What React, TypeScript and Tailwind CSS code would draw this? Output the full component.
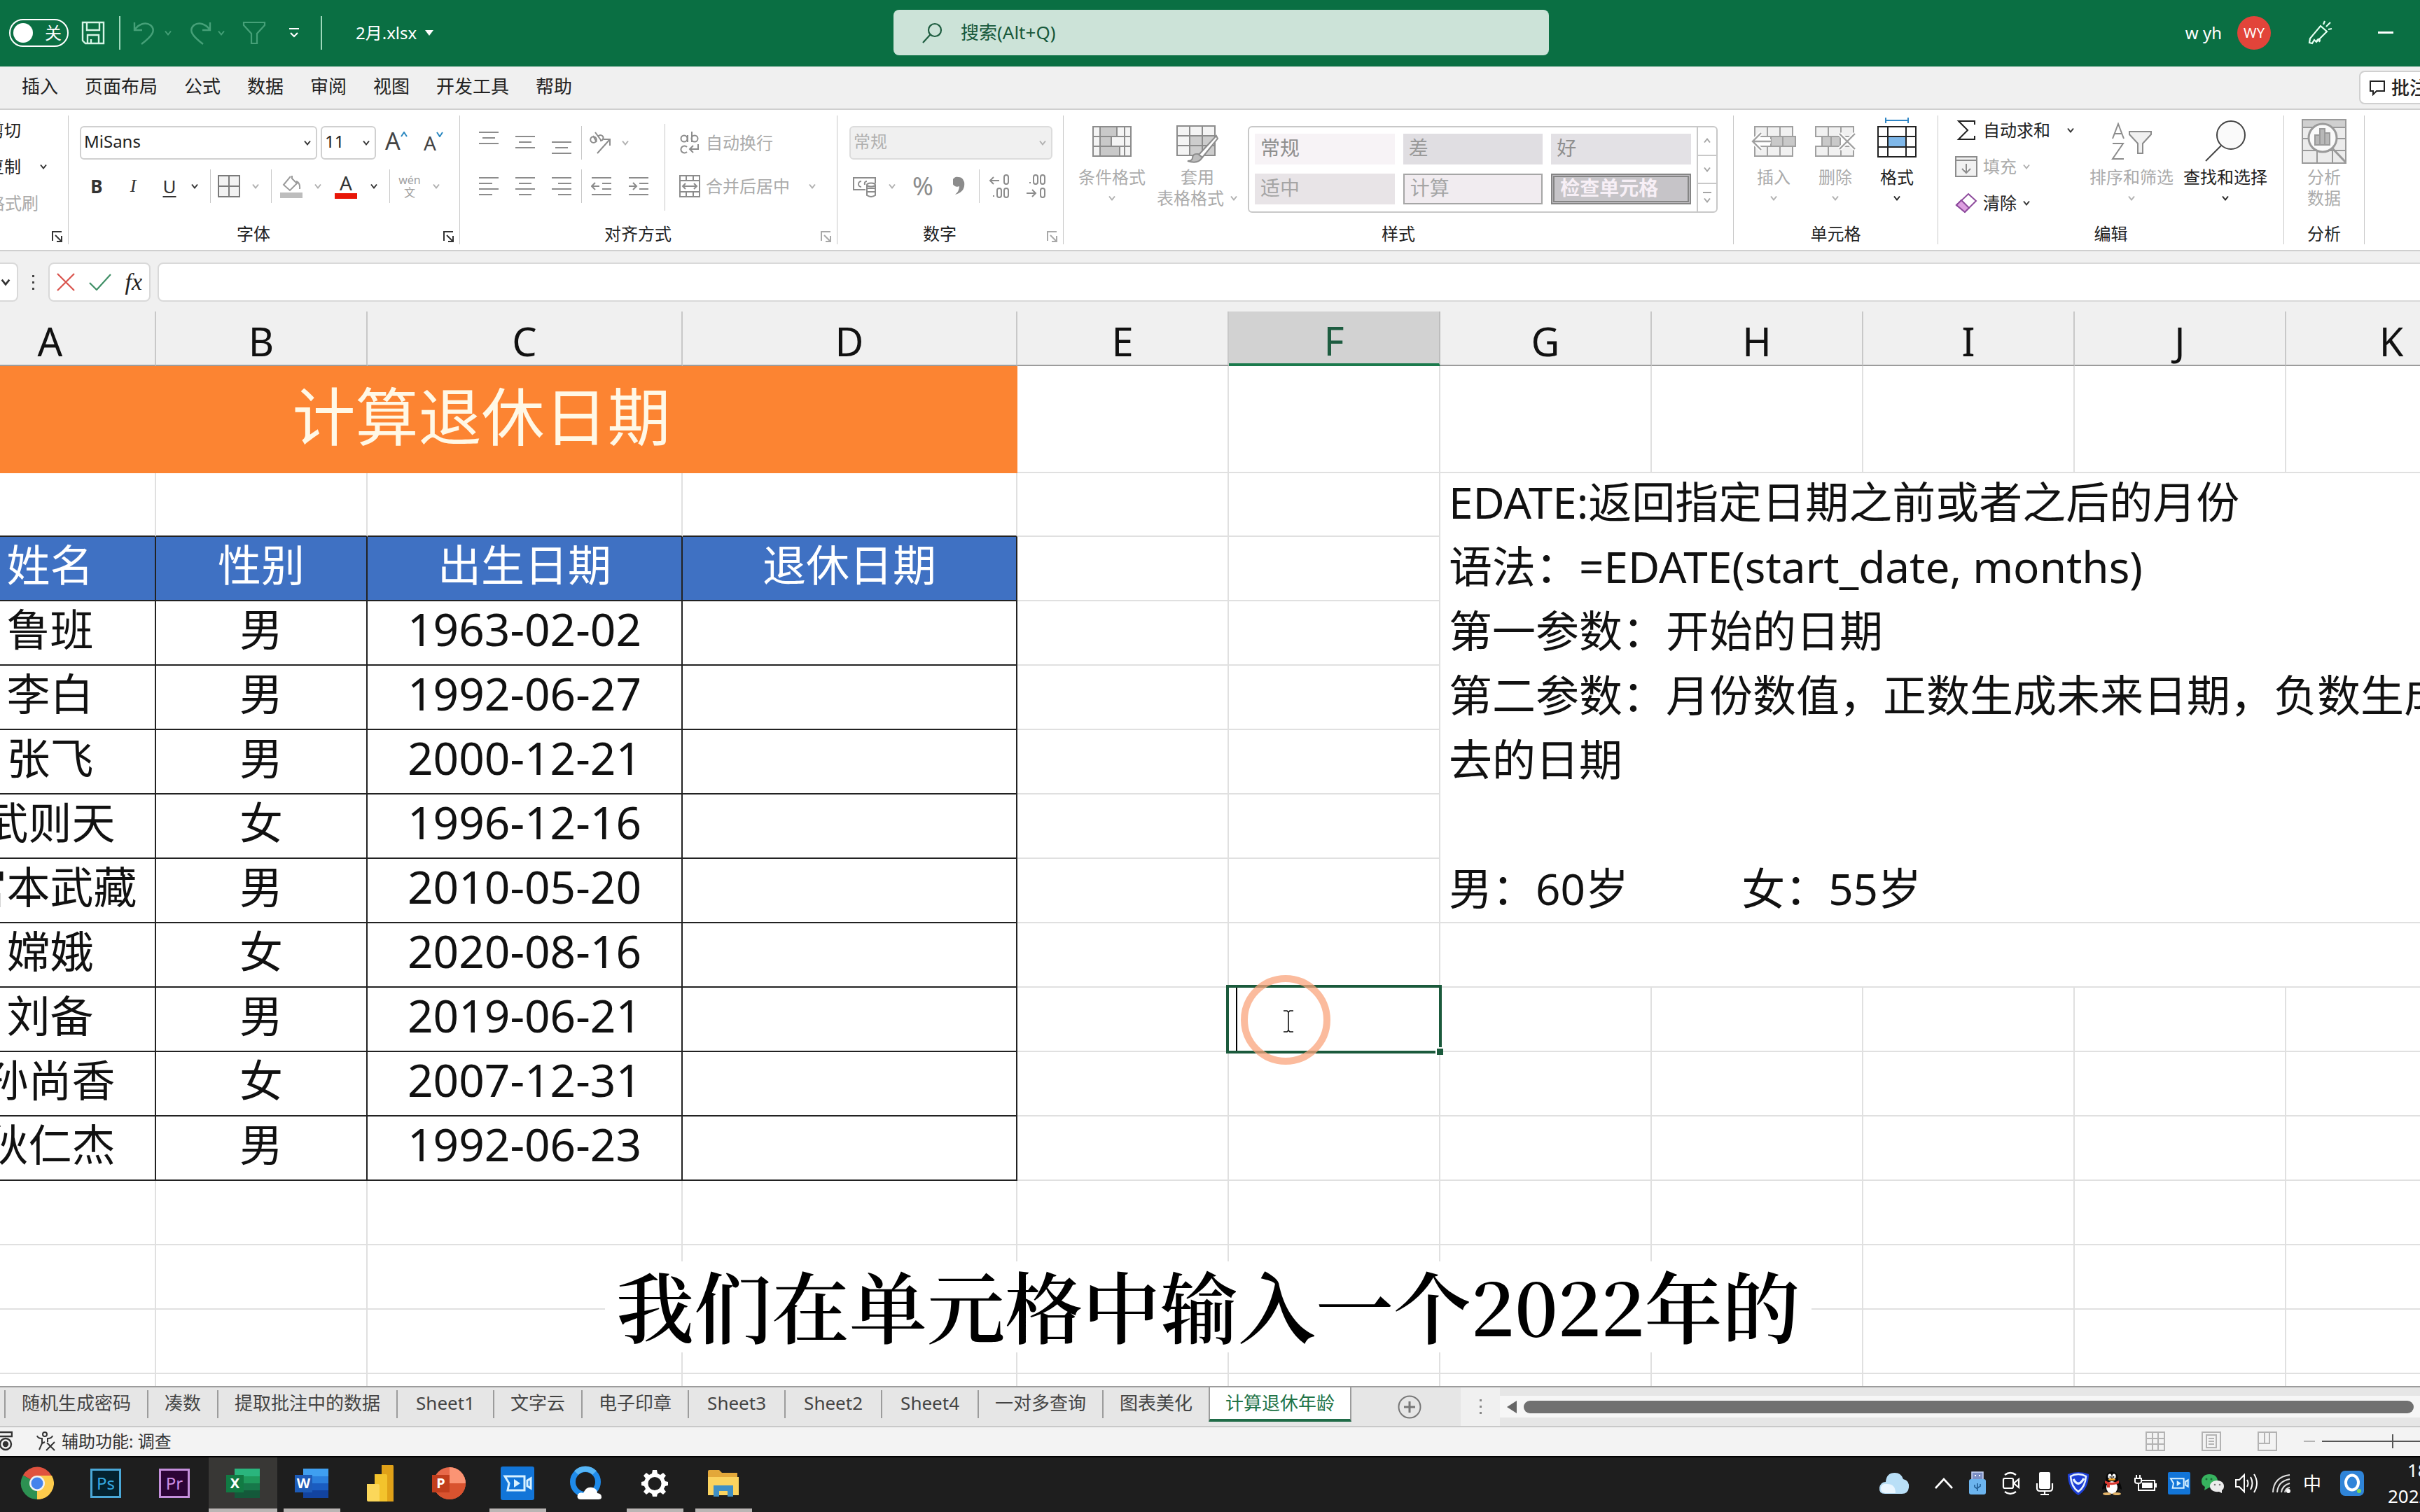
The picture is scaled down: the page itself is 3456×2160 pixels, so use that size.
import React from "react";
import type { ReactNode } from "react";

/* ---------- small shared pieces ---------- */

function Chevron({ className = "text-[#444]" }: { className?: string }) {
  return (
    <svg viewBox="0 0 12 12" className={`h-3 w-3 shrink-0 ${className}`} fill="none" stroke="currentColor" strokeWidth="2">
      <path d="M2 3.5 L6 8.5 L10 3.5" />
    </svg>
  );
}

function Drop({ label, width = "w-5", muted = true }: { label: string; width?: string; muted?: boolean }) {
  return (
    <button aria-label={label} className={`flex h-12 shrink-0 items-center justify-center ${width}`}>
      <Chevron className={muted ? "text-[#b0b0b0]" : "text-[#333]"} />
    </button>
  );
}

function Tool({ label, width, children }: { label: string; width: string; children: ReactNode }) {
  return (
    <button aria-label={label} className={`flex h-12 shrink-0 items-center justify-center ${width}`}>
      {children}
    </button>
  );
}

function Rule({ className = "" }: { className?: string }) {
  return <div className={`h-12 w-px shrink-0 bg-[#c8c8c8] ${className}`} />;
}

function Launcher({ muted }: { muted: boolean }) {
  return (
    <svg viewBox="0 0 18 18" className={`h-[18px] w-[18px] ${muted ? "text-[#a8a8a8]" : "text-[#333]"}`} fill="none" stroke="currentColor" strokeWidth="2">
      <path d="M2 15 V2 H15" />
      <path d="M6 7 L15 16 M15 8 V16 H8" />
    </svg>
  );
}

function Group({
  label,
  width,
  launcher,
  children,
}: {
  label?: string;
  width: string;
  launcher?: "on" | "off";
  children: ReactNode;
}) {
  return (
    <section aria-label={label} className={`flex shrink-0 flex-col border-r border-[#c8c8c8] ${width}`}>
      <div className="flex-1">{children}</div>
      <div className="flex h-[30px] items-center">
        <div className="flex-1 text-center">{label}</div>
        {launcher && (
          <button aria-label={`${label ?? ""}设置`} className="mt-2 flex w-[30px] justify-center">
            <Launcher muted={launcher === "off"} />
          </button>
        )}
      </div>
    </section>
  );
}

function BigButton({
  icon,
  width,
  lines,
  muted = true,
}: {
  icon: ReactNode;
  width: string;
  lines: ReactNode[];
  muted?: boolean;
}) {
  return (
    <button className={`flex shrink-0 flex-col items-center whitespace-nowrap ${width} ${muted ? "text-[#ababab]" : "text-[#222]"}`}>
      <span className="flex h-[73px] items-center">{icon}</span>
      {lines.map((l, i) => (
        <span key={i} className="flex h-[30px] items-center gap-2 leading-[30px]">
          {l}
        </span>
      ))}
    </button>
  );
}

/* ---------- title bar ---------- */

function TitleBar() {
  return (
    <header className="flex h-[95px] items-center overflow-hidden bg-[#0a6f43] pb-0.5 text-white">
      <div className="flex flex-1 items-center">
        <button aria-label="自动保存" className="ml-[13px] flex h-10 w-[85px] items-center justify-between rounded-full border-2 border-white pl-1 pr-2 text-[24px]">
          <span className="h-7 w-7 rounded-full bg-white" />
          <span className="leading-none">关</span>
        </button>
        <button aria-label="保存" className="ml-[18px]">
          <svg viewBox="0 0 34 34" className="h-[34px] w-[34px]" fill="none" stroke="#d6f5e6" strokeWidth="2.4">
            <path d="M2 2 H32 V32 H6 L2 28 Z M8 2 V13 H26 V2 M9 32 V20 H25 V32 M14 32 V26" />
          </svg>
        </button>
        <div className="ml-5 h-12 w-0.5 bg-[#9ed8bb]" />
        <button aria-label="撤消" className="ml-[18px]">
          <svg viewBox="0 0 32 34" className="h-[34px] w-8" fill="none" stroke="#46a078" strokeWidth="2.4">
            <path d="M2 2 V13 H13 M2 13 C8 4 18 1 25 6 C33 13 28 21 12 33" />
          </svg>
        </button>
        <Chevron className="ml-3 text-[#46a078]" />
        <button aria-label="恢复" className="ml-6">
          <svg viewBox="0 0 32 34" className="h-[34px] w-8" fill="none" stroke="#46a078" strokeWidth="2.4">
            <path d="M30 2 V13 H19 M30 13 C24 4 14 1 7 6 C-1 13 4 21 20 33" />
          </svg>
        </button>
        <Chevron className="ml-2 text-[#46a078]" />
        <button aria-label="筛选" className="ml-6">
          <svg viewBox="0 0 34 34" className="h-[34px] w-[34px]" fill="none" stroke="#46a078" strokeWidth="2.2">
            <path d="M2 2 H32 V6 L21 18 V32 H13 V18 L2 6 Z" />
          </svg>
        </button>
        <button aria-label="自定义快速访问工具栏" className="ml-8">
          <svg viewBox="0 0 16 16" className="h-4 w-4" fill="none" stroke="#fff" strokeWidth="2.2">
            <path d="M1 2 H15 M3 8 L8 13 L13 8" />
          </svg>
        </button>
        <div className="ml-[30px] h-12 w-0.5 bg-[#9ed8bb]" />
        <button className="ml-12 flex items-center gap-3 text-[24px]">
          2月.xlsx
          <svg viewBox="0 0 12 8" className="h-2 w-3" fill="#fff">
            <path d="M0 0 H12 L6 8 Z" />
          </svg>
        </button>
      </div>
      <label className="ml-8 flex h-[65px] w-[936px] shrink-0 items-center rounded-lg bg-[#cce3d8] pl-10">
        <svg viewBox="0 0 32 32" className="mr-6 h-8 w-8" fill="none" stroke="#1d5c3f" strokeWidth="2.2">
          <circle cx="19" cy="12" r="9" />
          <path d="M12.5 18.5 L2 30" />
        </svg>
        <input aria-label="搜索" placeholder="搜索(Alt+Q)" className="flex-1 bg-transparent text-[26px] outline-none placeholder:text-[#17593b] placeholder:opacity-100" />
      </label>
      <div className="flex flex-1 items-center justify-end">
        <span className="text-[24px]">w yh</span>
        <span className="ml-[22px] flex h-12 w-12 items-center justify-center rounded-full bg-[#e2443a] text-[20px]">WY</span>
        <button aria-label="画笔" className="ml-[53px]">
          <svg viewBox="0 0 36 36" className="h-9 w-9" fill="none" stroke="#e6fff2" strokeWidth="2.2">
            <path d="M3 26 L18 8 L27 16 L12 31 L9 28 L6 33 L2 32 Z M12 31 C14 25 19 26 16 31 M22 6 L24 1 M26 9 L32 3 M29 13 L34 12" />
          </svg>
        </button>
        <button aria-label="最小化" className="ml-[64px] mr-[38px] flex h-8 items-center">
          <span className="h-[3px] w-[22px] bg-white" />
        </button>
      </div>
    </header>
  );
}

/* ---------- ribbon tabs ---------- */

const ribbonTabs = ["插入", "页面布局", "公式", "数据", "审阅", "视图", "开发工具", "帮助"];

function RibbonTabs() {
  return (
    <nav className="flex h-[62px] items-center justify-between overflow-hidden border-b-2 border-[#cfcfcf] bg-[#f0f0f0] text-[26px] text-[#222]">
      <div className="flex gap-[38px] pb-1 pl-[31px]">
        {ribbonTabs.map((t) => (
          <button key={t}>{t}</button>
        ))}
      </div>
      <button className="-mr-9 flex h-12 w-[123px] items-center gap-2 rounded-lg border-2 border-[#d0d0d0] bg-white pl-3 font-medium">
        <svg viewBox="0 0 24 24" className="h-6 w-6 shrink-0" fill="none" stroke="#222" strokeWidth="2">
          <path d="M2 3 H22 V17 H11 L6 22 V17 H2 Z" />
        </svg>
        <span className="shrink-0 whitespace-nowrap">批注</span>
      </button>
    </nav>
  );
}

/* ---------- ribbon icons ---------- */

function Lines({ d }: { d: string }) {
  return (
    <svg viewBox="0 0 30 34" className="h-[34px] w-[30px]" fill="none" stroke="#8c8c8c" strokeWidth="2">
      <path d={d} />
    </svg>
  );
}

function AlignmentGroup() {
  return (
    <Group label="对齐方式" width="w-[539px]" launcher="off">
      <div className="flex">
        <div className="pt-[15px]">
          <div className="flex items-center pl-[15px]">
            <Tool label="顶端对齐" width="w-[52px]"><Lines d="M1 2 H29 M6 10 H24 M1 18 H29" /></Tool>
            <Tool label="垂直居中" width="w-[52px]"><Lines d="M1 8 H29 M6 16 H24 M1 24 H29" /></Tool>
            <Tool label="底端对齐" width="w-[52px]"><Lines d="M1 16 H29 M6 24 H24 M1 32 H29" /></Tool>
            <Rule className="ml-0.5" />
            <Tool label="方向" width="w-[52px]">
              <svg viewBox="0 0 34 34" className="h-[34px] w-[34px]" fill="none" stroke="#8c8c8c" strokeWidth="2">
                <path d="M13 32 L31 12 M31 21 V12 H22" />
                <path d="M4 10 a4 4 0 1 0 7 5 a4 4 0 1 0 -7 -5 M7 7 L12 16 M10 2 L18 13 M14 8 a4 4 0 1 1 3 6" />
              </svg>
            </Tool>
            <Drop label="方向选项" />
          </div>
          <div className="mt-[14px] flex items-center pl-[15px]">
            <Tool label="左对齐" width="w-[52px]"><Lines d="M1 5 H29 M1 13 H20 M1 21 H29 M1 29 H20" /></Tool>
            <Tool label="居中" width="w-[52px]"><Lines d="M1 5 H29 M6 13 H24 M1 21 H29 M6 29 H24" /></Tool>
            <Tool label="右对齐" width="w-[52px]"><Lines d="M1 5 H29 M10 13 H29 M1 21 H29 M10 29 H29" /></Tool>
            <Rule className="ml-0.5" />
            <Tool label="减少缩进量" width="w-[56px]"><Lines d="M1 5 H29 M16 13 H29 M16 21 H29 M1 29 H29 M12 17 H1 M6 12 L1 17 L6 22" /></Tool>
            <Tool label="增加缩进量" width="w-[50px]"><Lines d="M1 5 H29 M16 13 H29 M16 21 H29 M1 29 H29 M1 17 H12 M7 12 L12 17 L7 22" /></Tool>
          </div>
        </div>
        <div className="ml-3 mt-3 h-[124px] w-px bg-[#c8c8c8]" />
        <div className="pl-5 pt-[15px] text-[#ababab]">
          <button className="flex h-12 items-center gap-2">
            <svg viewBox="0 0 30 36" className="h-9 w-[30px]" fill="none" stroke="#8c8c8c" strokeWidth="2">
              <circle cx="7" cy="12" r="4.5" />
              <path d="M12 7 V17 M18 2 V17" />
              <circle cx="22" cy="12" r="4.5" />
              <path d="M11 24 a5 5 0 1 0 0 7 M27 20 V27 H16 M20 22 L15 27 L20 32" />
            </svg>
            自动换行
          </button>
          <div className="mt-[14px] flex h-12 items-center">
            <button className="flex items-center gap-2">
              <svg viewBox="0 0 30 32" className="h-8 w-[30px]" fill="none" stroke="#8c8c8c" strokeWidth="2">
                <path d="M1 1 H29 V31 H1 Z M1 8 H29 M1 24 H29 M10 1 V8 M20 1 V8 M10 24 V31 M20 24 V31 M5 16 H25 M9 12 L5 16 L9 20 M21 12 L25 16 L21 20" />
              </svg>
              合并后居中
            </button>
            <Drop label="合并选项" width="w-16" />
          </div>
        </div>
      </div>
    </Group>
  );
}

function FontGroup() {
  return (
    <Group label="字体" width="w-[559px]" launcher="on">
      <div className="flex items-center gap-[5px] pl-4 pt-[15px] text-[#222]">
        <div className="relative">
          <select aria-label="字体" className="h-12 w-[339px] appearance-none rounded-md border-2 border-[#d0d0d0] bg-white pb-1 pl-1">
            <option>MiSans</option>
          </select>
          <Chevron className="pointer-events-none absolute right-2 top-[18px] text-[#333]" />
        </div>
        <div className="relative">
          <select aria-label="字号" className="h-12 w-[79px] appearance-none rounded-md border-2 border-[#d0d0d0] bg-white pb-1 pl-1">
            <option>11</option>
          </select>
          <Chevron className="pointer-events-none absolute right-2 top-[18px] text-[#333]" />
        </div>
        <button aria-label="增大字号" className="ml-2 flex h-12 w-[50px] items-start text-[34px] leading-[42px] text-[#444]">
          A
          <svg viewBox="0 0 10 8" className="mt-2 h-2 w-2.5" fill="none" stroke="#2b88c0" strokeWidth="2"><path d="M1 7 L5 1 L9 7" /></svg>
        </button>
        <button aria-label="减小字号" className="flex h-12 w-[34px] items-start text-[28px] leading-[48px] text-[#444]">
          A
          <svg viewBox="0 0 10 8" className="mt-2 h-2 w-2.5" fill="none" stroke="#2b88c0" strokeWidth="2"><path d="M1 1 L5 7 L9 1" /></svg>
        </button>
      </div>
      <div className="mt-[14px] flex items-center pl-[14px] text-[26px] text-[#333]">
        <Tool label="加粗" width="w-[52px]"><b>B</b></Tool>
        <Tool label="倾斜" width="w-[52px]"><i className="font-['Liberation_Serif',serif]">I</i></Tool>
        <Tool label="下划线" width="w-[52px]"><u className="underline-offset-4">U</u></Tool>
        <Drop label="下划线选项" muted={false} />
        <Rule className="ml-3" />
        <Tool label="边框" width="w-[52px]">
          <svg viewBox="0 0 32 32" className="h-8 w-8" fill="#f2f2f2" stroke="#7a7a7a" strokeWidth="2">
            <path d="M1 1 H31 V31 H1 Z M16 1 V31 M1 16 H31" />
          </svg>
        </Tool>
        <Drop label="边框选项" width="w-6" />
        <Rule className="ml-[10px]" />
        <Tool label="填充颜色" width="w-[56px]">
          <svg viewBox="0 0 34 34" className="h-[34px] w-[34px]" fill="none" stroke="#9a9a9a" strokeWidth="2">
            <path d="M16 3 L6 15 L15 23 L25 13 L18 6 V2 M24 10 Q30 12 29 21" />
            <path d="M1 26 H33 V34 H1 Z" fill="#bdbdbd" stroke="none" />
          </svg>
        </Tool>
        <Drop label="填充选项" />
        <Tool label="字体颜色" width="w-[60px]">
          <span className="flex flex-col items-center text-[28px] leading-[26px]">
            A
            <span className="mt-0.5 h-2 w-8 bg-[#e81708]" />
          </span>
        </Tool>
        <Drop label="颜色选项" muted={false} />
        <Rule className="ml-3" />
        <Tool label="拼音" width="w-[56px]">
          <span className="flex flex-col items-center text-[16px] leading-[18px] text-[#a0a0a0]">
            <span>wén</span>
            <span>文</span>
          </span>
        </Tool>
        <Drop label="拼音选项" />
      </div>
    </Group>
  );
}

function NumberGroup() {
  return (
    <Group label="数字" width="w-[323px]" launcher="off">
      <div className="relative ml-[17px] mt-[15px] w-[290px]">
        <select aria-label="数字格式" disabled className="h-12 w-full appearance-none rounded-md border-2 border-[#dcdcdc] bg-[#f0f0f0] pb-1 pl-1 text-[#b0b0b0] opacity-100">
          <option>常规</option>
        </select>
        <Chevron className="pointer-events-none absolute right-2 top-[18px] text-[#b0b0b0]" />
      </div>
      <div className="mt-[14px] flex items-center pl-3 text-[#8c8c8c]">
        <Tool label="会计数字格式" width="w-[54px]">
          <svg viewBox="0 0 34 32" className="h-8 w-[34px]" fill="none" stroke="#8c8c8c" strokeWidth="2">
            <path d="M18 21 H1 V4 H32 V12 M12 9 a4 4 0 1 0 0 8 M20 9 Q16 9 17 14" />
            <path d="M20 14 V29 Q26 33 32 29 V14 M20 19 H32 M20 24 H32" />
            <ellipse cx="26" cy="14" rx="6" ry="2.5" />
          </svg>
        </Tool>
        <Drop label="货币选项" width="w-6" />
        <Tool label="百分比样式" width="w-[64px]"><span className="text-[36px] leading-none">%</span></Tool>
        <Tool label="千位分隔样式" width="w-[40px]">
          <svg viewBox="0 0 18 28" className="h-7 w-[18px]" fill="#8c8c8c">
            <path d="M8 1 A7 7 0 1 0 9 14 Q9 21 3 26 Q18 22 16 8 Q14 1 8 1 Z" />
          </svg>
        </Tool>
        <Rule className="ml-2" />
        <Tool label="增加小数位数" width="w-[56px]">
          <svg viewBox="0 0 30 36" className="h-9 w-[30px]" fill="none" stroke="#8c8c8c" strokeWidth="2">
            <path d="M15 10 H2 M7 5 L2 10 L7 15 M7 31 V33" />
            <rect x="22" y="2" width="6" height="13" rx="3" />
            <rect x="12" y="21" width="6" height="13" rx="3" />
            <rect x="22" y="21" width="6" height="13" rx="3" />
          </svg>
        </Tool>
        <Tool label="减少小数位数" width="w-[48px]">
          <svg viewBox="0 0 30 36" className="h-9 w-[30px]" fill="none" stroke="#8c8c8c" strokeWidth="2">
            <path d="M2 28 H15 M10 23 L15 28 L10 33 M7 12 V14" />
            <rect x="22" y="21" width="6" height="13" rx="3" />
            <rect x="12" y="2" width="6" height="13" rx="3" />
            <rect x="22" y="2" width="6" height="13" rx="3" />
          </svg>
        </Tool>
      </div>
    </Group>
  );
}

const styleCells = [
  { label: "常规", cls: "bg-[#f7f3f6] text-[#8f8f8f]" },
  { label: "差", cls: "bg-[#e0dee2] text-[#9a9a9a]" },
  { label: "好", cls: "bg-[#e3e1e5] text-[#8f8f8f]" },
  { label: "适中", cls: "bg-[#e8e4e7] text-[#a5a5a5]" },
  { label: "计算", cls: "border-2 border-[#a6a6a6] bg-[#f1ecf0] text-[#a5a5a5]" },
  { label: "检查单元格", cls: "border-[5px] border-double border-[#858585] bg-[#c6c4c8] font-bold text-[#f7eff6]" },
];

function StylesGroup() {
  return (
    <Group label="样式" width="w-[957px]">
      <div className="flex pl-5">
        <BigButton
          width="w-[98px]"
          lines={["条件格式", <Chevron key="c" className="text-[#b0b0b0]" />]}
          icon={
            <svg viewBox="0 0 56 44" className="h-11 w-14" fill="#f4f4f4" stroke="#8c8c8c" strokeWidth="2">
              <path d="M1 1 H55 V43 H1 Z" />
              <path d="M11 1 H35 V15 H11 Z M11 15 H27 V29 H11 Z M11 29 H39 V43 H11 Z" fill="#c9c9c9" />
              <path d="M1 15 H55 M1 29 H55 M46 1 V43" fill="none" />
            </svg>
          }
        />
        <BigButton
          width="ml-2 w-[130px]"
          lines={["套用", <React.Fragment key="f">表格格式 <Chevron className="text-[#b0b0b0]" /></React.Fragment>]}
          icon={
            <svg viewBox="0 0 60 54" className="mt-2 h-[54px] w-[60px]" fill="#f4f4f4" stroke="#8c8c8c" strokeWidth="2">
              <path d="M1 1 H55 V43 H1 Z" />
              <path d="M19 15 H55 V43 H19 Z" fill="#cdcdcd" stroke="none" />
              <path d="M1 15 H55 M1 29 H55 M19 1 V43 M37 1 V43 M1 1 H55 V43 H1 Z" fill="none" />
              <path d="M57 15 L32 42 L37 46 L59 19 Z" fill="#fff" />
              <path d="M31 41 Q23 40 23 47 Q22 51 16 51 Q31 56 37 46 Z" fill="#bdbdbd" />
            </svg>
          }
        />
        <div className="ml-[7px] mt-[15px] flex h-[124px] w-[671px] overflow-hidden rounded-md border-2 border-[#c8c8c8] bg-white">
          <div className="grid flex-1 grid-cols-3 gap-x-3 gap-y-3 px-2 py-[9px]">
            {styleCells.map((s) => (
              <button key={s.label} className={`flex h-11 items-center overflow-hidden whitespace-nowrap pb-1 pl-2 text-left text-[28px] leading-none ${s.cls}`}>
                {s.label}
              </button>
            ))}
          </div>
          <div className="flex w-7 flex-col divide-y-2 divide-[#c8c8c8] border-l-2 border-[#c8c8c8]">
            <button aria-label="上一行" className="flex flex-1 items-center justify-center"><Chevron className="rotate-180 text-[#a5a5a5]" /></button>
            <button aria-label="下一行" className="flex flex-1 items-center justify-center"><Chevron className="text-[#a5a5a5]" /></button>
            <button aria-label="其他" className="flex flex-1 flex-col items-center justify-center gap-1">
              <span className="h-0.5 w-3 bg-[#a5a5a5]" />
              <Chevron className="text-[#a5a5a5]" />
            </button>
          </div>
        </div>
      </div>
    </Group>
  );
}

function CellsGroup() {
  return (
    <Group label="单元格" width="w-[292px]">
      <div className="flex pl-[13px]">
        <BigButton
          width="w-[88px]"
          lines={["插入", <Chevron key="c" className="text-[#b0b0b0]" />]}
          icon={
            <svg viewBox="0 0 64 46" className="h-[46px] w-16" fill="#f1f1f1" stroke="#a0a0a0" strokeWidth="2">
              <path d="M5 2 H59 V16 H5 Z M23 2 V16 M41 2 V16 M5 30 H59 V44 H5 Z M23 30 V44 M41 30 V44" />
              <path d="M28 16 H63 V30 H28 Z M45 16 V30" fill="#c9c9c9" />
              <path d="M28 23 H3 M14 11 L2 23 L14 35" fill="none" stroke="#fff" strokeWidth="6" />
              <path d="M28 23 H3 M14 11 L2 23 L14 35" fill="none" strokeWidth="2.4" />
            </svg>
          }
        />
        <BigButton
          width="w-[88px]"
          lines={["删除", <Chevron key="c" className="text-[#b0b0b0]" />]}
          icon={
            <svg viewBox="0 0 60 46" className="h-[46px] w-[60px]" fill="#f1f1f1" stroke="#a0a0a0" strokeWidth="2">
              <path d="M2 2 H56 V16 H2 Z M20 2 V16 M38 2 V16 M2 30 H56 V44 H2 Z M20 30 V44 M38 30 V44" />
              <path d="M11 16 H37 V30 H11 Z M24 16 V30" fill="#c9c9c9" />
              <path d="M36 12 L58 34 M58 12 L36 34" fill="none" stroke="#fff" strokeWidth="6" />
              <path d="M36 12 L58 34 M58 12 L36 34" fill="none" strokeWidth="2.4" />
            </svg>
          }
        />
        <BigButton
          width="w-[88px]"
          muted={false}
          lines={["格式", <Chevron key="c" className="text-[#222]" />]}
          icon={
            <svg viewBox="0 0 58 58" className="mb-3 h-[58px] w-[58px]" fill="#fff" stroke="#222" strokeWidth="2">
              <path d="M13 5 H45 M13 1 V9 M45 1 V9" stroke="#2f86c5" />
              <path d="M2 14 H56 V57 H2 Z" />
              <path d="M16 28 H42 V43 H16 Z" fill="#7fb8ea" />
              <path d="M2 28 H56 M2 43 H56 M16 14 V57 M42 14 V57" fill="none" />
            </svg>
          }
        />
      </div>
    </Group>
  );
}

function EditingGroup() {
  return (
    <Group label="编辑" width="w-[494px]">
      <div className="flex">
        <div className="flex w-[211px] flex-col whitespace-nowrap pl-6 pt-0.5">
          <div className="flex h-[38px] items-center text-[#222]">
            <button className="flex items-center gap-2">
              <svg viewBox="0 0 32 30" className="h-[30px] w-8" fill="none" stroke="#222" strokeWidth="2">
                <path d="M28 7 V2 H5 L18 15 L5 28 H28 V23" />
              </svg>
              自动求和
            </button>
            <Drop label="求和选项" width="w-[58px]" muted={false} />
          </div>
          <button className="mt-[14px] flex h-[38px] items-center gap-2 text-[#ababab]">
            <svg viewBox="0 0 32 30" className="h-[30px] w-8" fill="#f1f1f1" stroke="#8c8c8c" strokeWidth="2">
              <path d="M1 1 H31 V29 H1 Z M1 6 H31 M16 11 V24 M10 18 L16 24 L22 18" />
            </svg>
            填充
            <Chevron className="text-[#b0b0b0]" />
          </button>
          <button className="mt-[14px] flex h-[38px] items-center gap-2 text-[#222]">
            <svg viewBox="0 0 32 30" className="h-[30px] w-8" fill="#fff" stroke="#8d4a9c" strokeWidth="2">
              <path d="M19 2 L30 12 L14 28 L2 18 Z" />
              <path d="M9 11 L20 22 L14 28 L2 18 Z" fill="#dda0e0" />
            </svg>
            清除
            <Chevron className="text-[#333]" />
          </button>
        </div>
        <BigButton
          width="w-[130px]"
          lines={["排序和筛选", <Chevron key="c" className="text-[#b0b0b0]" />]}
          icon={
            <svg viewBox="0 0 60 56" className="h-14 w-[60px]" fill="none" stroke="#8c8c8c" strokeWidth="2">
              <path d="M3 24 L11 3 L19 24 M6 17 H16 M3 31 H18 L3 53 H19" />
              <path d="M27 14 H58 V18 L46 31 V45 H39 V31 L27 18 Z" fill="#f1f1f1" />
            </svg>
          }
        />
        <BigButton
          width="ml-1 w-[130px]"
          muted={false}
          lines={["查找和选择", <Chevron key="c" className="text-[#222]" />]}
          icon={
            <svg viewBox="0 0 60 60" className="h-[60px] w-[60px]" fill="#fafafa" stroke="#444" strokeWidth="2">
              <circle cx="38" cy="21" r="20" />
              <path d="M24 36 L2 58" />
            </svg>
          }
        />
      </div>
    </Group>
  );
}

function Ribbon() {
  return (
    <div className="flex h-[202px] overflow-hidden border-b-2 border-[#cfcfcf] bg-white py-2 text-[24px] leading-[30px] text-[#222]">
      <Group width="w-[98px]" launcher="on">
        <div className="flex flex-col pt-0.5">
          <button className="flex h-[38px] w-[30px] items-center justify-end overflow-hidden whitespace-nowrap">剪切</button>
          <div className="mt-[14px] flex h-[38px] items-center">
            <button className="flex w-[30px] justify-end overflow-hidden whitespace-nowrap">复制</button>
            <Drop label="复制选项" width="w-16" muted={false} />
          </div>
          <button className="mt-[14px] flex h-[38px] w-[55px] items-center justify-end overflow-hidden whitespace-nowrap text-[#ababab]">格式刷</button>
        </div>
      </Group>
      <FontGroup />
      <AlignmentGroup />
      <NumberGroup />
      <StylesGroup />
      <CellsGroup />
      <EditingGroup />
      <Group label="分析" width="w-[115px]">
        <div className="flex justify-center">
          <BigButton
            width="w-[98px]"
            lines={["分析", "数据"]}
            icon={
              <svg viewBox="0 0 64 64" className="h-16 w-16" fill="#ececec" stroke="#9a9a9a" strokeWidth="2">
                <path d="M1 1 H63 V63 H1 Z M1 12 H63 M1 28 H63 M1 45 H63 M22 45 V63 M44 45 V63" />
                <path d="M1 1 H63 V12 H1 Z" fill="#d0d0d0" />
                <circle cx="30" cy="27" r="20" fill="#fafafa" strokeWidth="3" />
                <path d="M19 23 H26 V37 H19 Z M26 14 H33 V37 H26 Z M33 20 H40 V37 H33 Z" fill="#b8b8b8" />
                <path d="M44 42 L63 62" strokeWidth="3" />
              </svg>
            }
          />
        </div>
      </Group>
    </div>
  );
}

/* ---------- formula bar ---------- */

function FormulaBar() {
  return (
    <div className="flex h-[86px] items-start overflow-hidden bg-[#f0f0f0] pt-4">
      <button aria-label="名称框" className="flex h-[56px] w-[26px] items-center rounded-r-lg border-2 border-l-0 border-[#d9d9d9] bg-white">
        <Chevron className="h-4 w-4 text-[#333]" />
      </button>
      <div className="flex h-[56px] w-[43px] flex-col items-center justify-center gap-1.5">
        <span className="h-[3px] w-[3px] bg-[#444]" />
        <span className="h-[3px] w-[3px] bg-[#444]" />
        <span className="h-[3px] w-[3px] bg-[#444]" />
      </div>
      <div className="flex h-[56px] w-[146px] items-center justify-between rounded-lg border-2 border-[#d9d9d9] bg-white px-2.5">
        <button aria-label="取消">
          <svg viewBox="0 0 26 26" className="h-[26px] w-[26px]" fill="none" stroke="#d9534c" strokeWidth="2.2"><path d="M1 1 L25 25 M25 1 L1 25" /></svg>
        </button>
        <button aria-label="输入">
          <svg viewBox="0 0 32 24" className="h-6 w-8" fill="none" stroke="#3f8f66" strokeWidth="2.2"><path d="M1 13 L11 23 L31 1" /></svg>
        </button>
        <button aria-label="插入函数" className="font-['Liberation_Serif',serif] text-[34px] italic leading-none text-[#222]">fx</button>
      </div>
      <input aria-label="编辑栏" className="-mr-4 ml-[10px] h-[56px] flex-1 rounded-lg border-2 border-[#d9d9d9] bg-white outline-none" />
    </div>
  );
}

/* ---------- worksheet ---------- */

const columns = ["A", "B", "C", "D", "E", "F", "G", "H", "I", "J", "K"];
const rest = ["E", "F", "G", "H", "I", "J", "K"];

const people = [
  ["鲁班", "男", "1963-02-02"],
  ["李白", "男", "1992-06-27"],
  ["张飞", "男", "2000-12-21"],
  ["武则天", "女", "1996-12-16"],
  ["宫本武藏", "男", "2010-05-20"],
  ["嫦娥", "女", "2020-08-16"],
  ["刘备", "男", "2019-06-21"],
  ["孙尚香", "女", "2007-12-31"],
  ["狄仁杰", "男", "1992-06-23"],
];

const notes = [
  "EDATE:返回指定日期之前或者之后的月份",
  "语法：=EDATE(start_date, months)",
  "第一参数：开始的日期",
  "第二参数：月份数值，正数生成未来日期，负数生成过",
  "去的日期",
  "",
  "男：60岁          女：55岁",
];

const grid = "border-b-2 border-r-2 border-[#e0e0e0]";
const ink = "border-b-2 border-r-2 border-[#222] p-0 pb-2.5 text-center";

function Blank({ keys }: { keys: string[] }) {
  return (
    <>
      {keys.map((k) => (
        <td key={k} className={grid} />
      ))}
    </>
  );
}

function ActiveCell() {
  return (
    <td className={`relative ${grid}`}>
      <input aria-label="F10" className="absolute -bottom-1 -left-1 -right-1 -top-1 w-[308px] border-4 border-[#1b5a3c] bg-white outline-none" />
      <div className="absolute bottom-0 left-2.5 top-0 w-0.5 bg-black" />
      <div className="absolute -bottom-1.5 -right-1.5 h-[11px] w-[11px] border-l-2 border-t-2 border-white bg-[#1b5a3c]" />
      <div className="absolute -top-[18px] left-[17px] h-32 w-32 rounded-full border-[10px] border-[#f9a47c] opacity-75" />
      <svg viewBox="0 0 14 32" className="absolute left-[78px] top-8 h-8 w-[14px]" fill="none" stroke="#111" strokeWidth="1.6">
        <path d="M0 1 H5 L7 3 L9 1 H14 M7 3 V29 M0 31 H5 L7 29 L9 31 H14" />
      </svg>
    </td>
  );
}

function Worksheet() {
  return (
    <main className="relative h-0 grow overflow-hidden bg-white">
      <table className="-ml-[78px] w-[3645px] table-fixed border-separate border-spacing-0 text-[62px] leading-[76px] text-[#111]">
        <colgroup>
          <col className="w-[301px]" />
          <col className="w-[302px]" />
          <col className="w-[450px]" />
          <col className="w-[478px]" />
          {rest.map((c) => (
            <col key={c} className="w-[302px]" />
          ))}
        </colgroup>
        <thead>
          <tr className="h-[78px] bg-[#f0f0f0] text-[56px] leading-[64px]">
            {columns.map((c) => (
              <th
                key={c}
                scope="col"
                className={
                  c === "F"
                    ? "border-b-4 border-r-2 border-b-[#1b7a4c] border-r-[#bdbdbd] bg-[#d2d2d2] p-0 pt-2 font-normal text-[#1d5c40]"
                    : "border-b-2 border-r-2 border-b-[#9c9c9c] border-r-[#c8c8c8] p-0 pt-2 font-normal"
                }
              >
                {c}
              </th>
            ))}
          </tr>
        </thead>
        <tbody>
          <tr className="h-[153px]">
            <td colSpan={4} className="bg-[#fc8432] pb-3 text-center text-[90px] leading-[120px] text-[#fff8e6]">
              计算退休日期
            </td>
            <Blank keys={rest} />
          </tr>
          <tr className="h-[91px]">
            {["A", "B", "C", "D"].map((k) => (
              <td key={k} className="border-b-2 border-r-2 border-b-[#222] border-r-[#e0e0e0]" />
            ))}
            <Blank keys={["E", "F"]} />
            <td colSpan={5} rowSpan={7} className={`whitespace-pre py-0 pl-3 pr-0 align-top leading-[82px] ${grid}`}>
              {notes.map((n, i) => (
                <div key={i} className={i === 6 ? "h-[88px]" : "h-[92px]"}>
                  {n}
                </div>
              ))}
            </td>
          </tr>
          <tr className="h-[92px] bg-[#3f71c3] text-white">
            {["姓名", "性别", "出生日期", "退休日期"].map((h) => (
              <th key={h} scope="col" className={`font-normal ${ink}`}>
                {h}
              </th>
            ))}
            <td className={`bg-white ${grid}`} />
            <td className={`bg-white ${grid}`} />
          </tr>
          {people.map((p, r) => (
            <tr key={p[0]} className="h-[92px]">
              <td className={`whitespace-nowrap ${ink}`}>{p[0]}</td>
              <td className={ink}>{p[1]}</td>
              <td className={`whitespace-nowrap text-[64px] ${ink}`}>{p[2]}</td>
              <td className={ink} />
              {r < 5 && <Blank keys={["E", "F"]} />}
              {r === 5 && (
                <>
                  <Blank keys={["E", "F"]} />
                  <td colSpan={5} className={grid} />
                </>
              )}
              {r === 6 && (
                <>
                  <Blank keys={["E"]} />
                  <ActiveCell />
                  <Blank keys={["G", "H", "I", "J", "K"]} />
                </>
              )}
              {r > 6 && <Blank keys={rest} />}
            </tr>
          ))}
          {[1, 2, 3, 4].map((r) => (
            <tr key={r} className="h-[92px]">
              <Blank keys={columns} />
            </tr>
          ))}
        </tbody>
      </table>
      <p className="absolute bottom-12 left-[864px] flex h-[130px] items-center whitespace-nowrap bg-white px-4 pb-2 font-['Noto_Serif_CJK_SC','Source_Han_Serif_SC','Noto_Sans_CJK_SC',serif] text-[111px] font-semibold leading-none text-black">
        我们在单元格中输入一个
        <span className="text-[108px]">2022</span>
        年的
      </p>
    </main>
  );
}

/* ---------- sheet tabs and status bar ---------- */

const sheets = ["随机生成密码", "凑数", "提取批注中的数据", "Sheet1", "文字云", "电子印章", "Sheet3", "Sheet2", "Sheet4", "一对多查询", "图表美化"];

function SheetTabs() {
  return (
    <div className="flex h-[59px] items-stretch overflow-hidden border-b-2 border-t-2 border-b-[#c9c9c9] border-t-[#9c9c9c] bg-[#e6e6e6] text-[26px] text-[#444]">
      <div className="ml-1.5 flex items-start pt-1">
        {sheets.map((s, i) => (
          <button
            key={s}
            className={`flex h-10 items-center justify-center whitespace-nowrap px-[23px] pb-1 ${s.startsWith("Sheet") ? "min-w-[138px]" : ""} ${i === 0 ? "border-l-2" : ""} ${i < sheets.length - 1 ? "border-r-2" : ""} border-[#9c9c9c]`}
          >
            {s}
          </button>
        ))}
      </div>
      <button className="-mt-0.5 mb-1.5 flex items-center whitespace-nowrap border-x-2 border-b-4 border-x-[#9c9c9c] border-b-[#1f6b47] bg-white px-[22px] pt-0.5 text-[#217346]">计算退休年龄</button>
      <button aria-label="新工作表" className="ml-[66px] flex items-center">
        <svg viewBox="0 0 34 34" className="h-[34px] w-[34px]" fill="none" stroke="#777" strokeWidth="2">
          <circle cx="17" cy="17" r="15.5" />
          <path d="M17 9 V25 M9 17 H25" strokeWidth="3" />
        </svg>
      </button>
      <div className="ml-14 flex w-14 flex-col items-center justify-center gap-1.5 bg-[#f0f0f0]">
        <span className="h-[3px] w-[3px] bg-[#888]" />
        <span className="h-[3px] w-[3px] bg-[#888]" />
        <span className="h-[3px] w-[3px] bg-[#888]" />
      </div>
      <div className="my-3 flex flex-1 items-center bg-[#f6f6f6] pl-2.5 pr-[9px]">
        <button aria-label="向左滚动">
          <svg viewBox="0 0 14 18" className="h-[18px] w-[14px]" fill="#666"><path d="M14 0 V18 L0 9 Z" /></svg>
        </button>
        <div className="ml-2.5 h-[18px] flex-1 rounded-full bg-[#707070]" />
      </div>
    </div>
  );
}

function StatusBar() {
  return (
    <div className="flex h-[41px] items-center justify-between overflow-hidden bg-[#f3f3f3] pb-0.5 text-[24px] text-[#333]">
      <div className="flex items-center">
        <svg viewBox="0 0 18 30" className="h-[30px] w-[18px]" fill="none" stroke="#333" strokeWidth="2.4">
          <path d="M0 2 H17 V8 H0" />
          <circle cx="8" cy="19" r="8" />
          <circle cx="8" cy="19" r="3" fill="#333" />
        </svg>
        <button className="ml-[34px] flex items-center gap-2">
          <svg viewBox="0 0 28 28" className="h-7 w-7" fill="none" stroke="#333" strokeWidth="2">
            <circle cx="12" cy="4" r="3" />
            <path d="M1 6 Q2 10 8 10 V17 L4 26 M23 6 Q22 10 16 10 V15 M8 17 L12 15 M15 16 L26 27 M26 15 L14 27" />
          </svg>
          辅助功能: 调查
        </button>
      </div>
      <div className="-mr-28 flex items-center">
        <button aria-label="普通视图">
          <svg viewBox="0 0 28 28" className="h-7 w-7" fill="none" stroke="#b3b3b3" strokeWidth="2"><path d="M1 1 H27 V27 H1 Z M10 1 V27 M18 1 V27 M1 10 H27 M1 18 H27" /></svg>
        </button>
        <button aria-label="页面布局视图" className="ml-[52px]">
          <svg viewBox="0 0 28 28" className="h-7 w-7" fill="none" stroke="#b3b3b3" strokeWidth="2"><path d="M1 1 H27 V27 H1 Z M7 5 H21 V23 H7 Z M10 10 H18 M10 14 H18 M10 18 H18" /></svg>
        </button>
        <button aria-label="分页预览" className="ml-[52px]">
          <svg viewBox="0 0 28 28" className="h-7 w-7" fill="none" stroke="#b3b3b3" strokeWidth="2"><path d="M1 1 H27 V27 H1 Z M1 17 H17 V1 M10 1 V17" /></svg>
        </button>
        <button aria-label="缩小" className="ml-[38px] flex h-8 items-center"><span className="h-0.5 w-4 bg-[#b3b3b3]" /></button>
        <div className="relative ml-[10px] flex w-[252px] items-center">
          <input type="range" aria-label="缩放" className="h-0.5 w-full appearance-none bg-[#555] [&::-webkit-slider-thumb]:appearance-none" />
          <span className="absolute left-[100px] h-5 w-0.5 bg-[#555]" />
        </div>
      </div>
    </div>
  );
}

/* ---------- taskbar ---------- */

function OfficeIcon({ letter, badge, tones }: { letter: string; badge: string; tones: string[] }) {
  return (
    <span className="relative block h-12 w-12">
      <svg viewBox="0 0 48 48" className="h-12 w-12">
        <path d="M12 3 H48 V14 H12 Z" fill={tones[0]} />
        <path d="M12 14 H48 V24 H12 Z" fill={tones[1]} />
        <path d="M12 24 H48 V34 H12 Z" fill={tones[2]} />
        <path d="M12 34 H48 V45 H12 Z" fill={tones[3]} />
        <path d="M0 12 H25 V37 H0 Z" fill={badge} />
      </svg>
      <span className="absolute left-0 top-3 flex h-[25px] w-[25px] items-center justify-center text-[20px] font-bold leading-none text-white">{letter}</span>
    </span>
  );
}

function AdobeIcon({ text, cls }: { text: string; cls: string }) {
  return <span className={`flex h-[42px] w-11 items-center justify-center border-[3px] text-[24px] leading-none ${cls}`}>{text}</span>;
}

function RecorderIcon({ className }: { className: string }) {
  return (
    <svg viewBox="0 0 48 48" className={className}>
      <rect width="48" height="48" rx="3" fill="#1275d8" />
      <path d="M6 14 H34 V34 H10 L12 24 Z M38 20 L43 17 V31 L38 28 Z" fill="none" stroke="#d8f1ff" strokeWidth="3" />
      <path d="M19 18 L28 24 L19 30 Z" fill="#d8f1ff" />
    </svg>
  );
}

const apps: { name: string; state: "" | "open" | "active"; icon: ReactNode }[] = [
  {
    name: "Chrome",
    state: "",
    icon: (
      <svg viewBox="0 0 48 48" className="h-12 w-12">
        <path d="M24 24 L3.9 12.5 A23 23 0 0 1 44.5 13 Z" fill="#e0523f" />
        <path d="M24 24 L44.5 13 A23 23 0 0 1 24 47 Z" fill="#fdcb4c" />
        <path d="M24 24 L24 47 A23 23 0 0 1 3.9 12.5 Z" fill="#2d9152" />
        <path d="M24 13 H45 A23 23 0 0 1 24 47 L34 29 Z" fill="#fdcb4c" />
        <circle cx="24" cy="24" r="11" fill="#f2f2f2" />
        <circle cx="24" cy="24" r="8.5" fill="#4483ec" />
      </svg>
    ),
  },
  { name: "Photoshop", state: "", icon: <AdobeIcon text="Ps" cls="border-[#4aa8d8] bg-[#04222f] text-[#35a9e0]" /> },
  { name: "Premiere", state: "", icon: <AdobeIcon text="Pr" cls="border-[#c58fdc] bg-[#2c0436] text-[#cf8fe6]" /> },
  { name: "Excel", state: "active", icon: <OfficeIcon letter="X" badge="#117a43" tones={["#2ab57d", "#1f9a5c", "#17784a", "#14593a"]} /> },
  { name: "Word", state: "open", icon: <OfficeIcon letter="W" badge="#1d5bb8" tones={["#3f9ff0", "#2b7fdc", "#1a5cc0", "#1243a0"]} /> },
  {
    name: "Power BI",
    state: "",
    icon: (
      <svg viewBox="0 0 40 54" className="h-[54px] w-10">
        <path d="M22 1 H38 Q39 1 39 3 V53 H22 Z" fill="#e0a118" />
        <path d="M12 14 H28 Q30 14 30 16 V53 H12 Z" fill="#f3c32c" />
        <path d="M1 28 H17 Q19 28 19 30 V53 H3 Q1 53 1 51 Z" fill="#fbd75a" />
      </svg>
    ),
  },
  {
    name: "PowerPoint",
    state: "",
    icon: (
      <span className="relative block h-12 w-12">
        <svg viewBox="0 0 48 48" className="h-12 w-12">
          <circle cx="25" cy="24" r="23" fill="#e8694a" />
          <path d="M25 1 A23 23 0 0 1 48 24 H25 Z" fill="#fb9474" />
          <path d="M2 24 H48 A23 23 0 0 1 2 24 Z" fill="#d9532f" />
          <path d="M0 12 H25 V37 H0 Z" fill="#c13e1d" />
        </svg>
        <span className="absolute left-0 top-3 flex h-[25px] w-[25px] items-center justify-center text-[20px] font-bold leading-none text-white">P</span>
      </span>
    ),
  },
  { name: "录屏", state: "open", icon: <RecorderIcon className="h-12 w-12" /> },
  {
    name: "QQ浏览器",
    state: "",
    icon: (
      <svg viewBox="0 0 48 50" className="h-[50px] w-12">
        <circle cx="23" cy="23" r="18" fill="none" stroke="#1f8bea" strokeWidth="8" />
        <path d="M10 10 A18 18 0 0 1 36 10" fill="none" stroke="#57b6f7" strokeWidth="8" />
        <path d="M16 48 Q10 48 12 41 Q15 37 20 39 Q24 29 33 31 Q40 33 40 39 Q47 40 46 46 Q45 48 42 48 Z" fill="#fff" />
      </svg>
    ),
  },
  {
    name: "设置",
    state: "open",
    icon: (
      <svg viewBox="0 0 40 40" className="h-10 w-10" fill="#fff">
        <path fillRule="evenodd" d="M17 1 H23 L24 6 L28 8 L32 5 L36 9 L33 13 L35 17 L39 18 V23 L35 24 L33 28 L36 32 L32 36 L28 33 L24 35 L23 39 H17 L16 35 L12 33 L8 36 L4 32 L7 28 L5 24 L1 23 V18 L5 17 L7 13 L4 9 L8 5 L12 8 L16 6 Z M20 11 A9.500 9.500 0 1 0 20 30 A9.500 9.500 0 1 0 20 11 Z" />
      </svg>
    ),
  },
  {
    name: "文件资源管理器",
    state: "open",
    icon: (
      <svg viewBox="0 0 46 42" className="h-[42px] w-[46px]">
        <path d="M1 4 Q1 2 3 2 H17 L21 6 H43 V38 H1 Z" fill="#e3a83a" />
        <path d="M1 12 H45 V38 H1 Z" fill="#fbd35f" />
        <path d="M9 40 V24 H37 V40 H29 V32 H17 V40 Z" fill="#3f8fc5" />
      </svg>
    ),
  },
];

const trayIcons: { name: string; width: string; icon: ReactNode }[] = [
  {
    name: "天气",
    width: "w-[94px]",
    icon: (
      <svg viewBox="0 0 44 32" className="h-8 w-11">
        <path d="M9 31 Q0 31 1 22 Q3 14 10 14 Q11 1 23 1 Q32 1 35 10 Q44 12 43 22 Q42 31 33 31 Z" fill="#b9dff7" />
        <path d="M10 30 Q2 29 3 22 Q5 16 12 17 Q24 17 24 30 Z" fill="#eaf6ff" />
      </svg>
    ),
  },
  {
    name: "显示隐藏的图标",
    width: "w-12",
    icon: <svg viewBox="0 0 26 16" className="h-4 w-[26px]" fill="none" stroke="#fff" strokeWidth="2.6"><path d="M1 15 L13 2 L25 15" /></svg>,
  },
  {
    name: "USB",
    width: "w-12",
    icon: (
      <svg viewBox="0 0 26 34" className="h-[34px] w-[26px]">
        <path d="M5 1 H21 V12 H5 Z" fill="#7d90c4" stroke="#c9d6f7" strokeWidth="1.500" />
        <path d="M9 5 H11 V7 H9 Z M15 5 H17 V7 H15 Z" fill="#fff" />
        <rect x="1" y="11" width="24" height="22" rx="3" fill="#6cb4ee" />
        <path d="M13 28 V17 M9 19 V22 L13 25 M17 18 V21 L13 24" fill="none" stroke="#28659c" strokeWidth="1.800" />
      </svg>
    ),
  },
  {
    name: "会议",
    width: "w-12",
    icon: (
      <svg viewBox="0 0 26 34" className="h-[34px] w-[26px]" fill="none" stroke="#fff" strokeWidth="2.2">
        <rect x="2" y="10" width="14" height="14" rx="2" />
        <path d="M18 16 L24 11 V23 L18 18 Z M4 5 Q12 -1 20 5 M4 29 Q12 35 20 29" />
      </svg>
    ),
  },
  {
    name: "麦克风",
    width: "w-12",
    icon: (
      <svg viewBox="0 0 26 34" className="h-[34px] w-[26px]">
        <rect x="5" y="1" width="16" height="24" rx="2" fill="#fff" />
        <path d="M2 17 V24 Q2 28 6 28 H20 Q24 28 24 24 V17 M13 28 V33 M7 33 H19" fill="none" stroke="#fff" strokeWidth="2.2" />
      </svg>
    ),
  },
  {
    name: "安全",
    width: "w-12",
    icon: (
      <svg viewBox="0 0 32 34" className="h-[34px] w-8">
        <path d="M16 1 Q24 1 31 4 Q31 25 16 34 Q1 25 1 4 Q8 1 16 1 Z" fill="#1d3fd6" />
        <path d="M16 4 Q22 4 27 7 Q26 22 16 29 Q6 22 5 7 Q10 4 16 4 Z" fill="#1d3fd6" stroke="#e6f2ff" strokeWidth="2.6" />
        <path d="M9 11 Q16 24 24 10" fill="none" stroke="#e6f2ff" strokeWidth="3.4" />
      </svg>
    ),
  },
  {
    name: "QQ",
    width: "w-12",
    icon: (
      <svg viewBox="0 0 32 34" className="h-[34px] w-8">
        <path d="M16 0 Q25 1 25 13 Q30 19 30 26 L26 24 Q24 32 16 32 Q8 32 6 24 L2 26 Q2 19 7 13 Q7 1 16 0 Z" fill="#080808" />
        <ellipse cx="16" cy="23" rx="8" ry="9" fill="#fff" />
        <ellipse cx="13" cy="7" rx="2.600" ry="3.600" fill="#fff" />
        <ellipse cx="19" cy="7" rx="2.600" ry="3.600" fill="#fff" />
        <circle cx="13.500" cy="8" r="1" />
        <circle cx="18.500" cy="8" r="1" />
        <ellipse cx="16" cy="11.500" rx="5" ry="1.600" fill="#f5a623" />
        <path d="M6 13 Q16 19 26 13 V17 Q18 20 13 19 V23 H9 V18 L6 17 Z" fill="#d93a32" />
        <ellipse cx="9" cy="32" rx="6" ry="2" fill="#e2b46a" />
        <ellipse cx="23" cy="32" rx="6" ry="2" fill="#e2b46a" />
      </svg>
    ),
  },
  {
    name: "电源",
    width: "w-12",
    icon: (
      <svg viewBox="0 0 34 24" className="h-6 w-[34px]" fill="none" stroke="#fff" strokeWidth="2">
        <path d="M12 8 H30 V22 H7 V12 M2 5 H11 V10 Q11 12 6 12 Q2 12 2 10 Z M4 0 V5 M9 0 V5" />
        <path d="M12 11 H27 V19 H12 Z M31 12 H33 V18 H31 Z" fill="#fff" stroke="none" />
      </svg>
    ),
  },
  { name: "录屏托盘", width: "w-12", icon: <RecorderIcon className="h-[34px] w-8" /> },
  {
    name: "微信",
    width: "w-12",
    icon: (
      <svg viewBox="0 0 34 28" className="h-7 w-[34px]">
        <path d="M12 1 C20 1 24 5 24 11 C24 17 18 20 12 20 L5 24 L6 19 C2 17 1 14 1 11 C1 5 6 1 12 1 Z" fill="#37b35f" />
        <path d="M23 10 C30 10 33 14 33 18 C33 21 32 23 30 24 V28 L26 26 C18 27 13 23 13 18 C13 14 17 10 23 10 Z" fill="#ececec" />
        <circle cx="8" cy="8" r="1.500" fill="#1d6b38" />
        <circle cx="15" cy="8" r="1.500" fill="#1d6b38" />
        <circle cx="20" cy="16" r="1.300" fill="#777" />
        <circle cx="27" cy="16" r="1.300" fill="#777" />
      </svg>
    ),
  },
  {
    name: "音量",
    width: "w-12",
    icon: (
      <svg viewBox="0 0 34 30" className="h-[30px] w-[34px]" fill="none" stroke="#fff" strokeWidth="2">
        <path d="M2 10 H7 L14 3 V27 L7 20 H2 Z M18 10 Q21 15 18 20 M23 6 Q28 15 23 24 M28 2 Q36 15 28 28" />
      </svg>
    ),
  },
  {
    name: "网络",
    width: "w-[52px]",
    icon: (
      <svg viewBox="0 0 28 30" className="h-[30px] w-7" fill="none" stroke="#e0e0e0" strokeWidth="2">
        <path d="M2 28 Q3 6 26 3 M8 28 Q9 12 26 9 M14 28 Q15 18 26 15 M19 28 Q20 22 26 21" />
        <circle cx="24" cy="26" r="3" fill="#fff" stroke="none" />
      </svg>
    ),
  },
];

function Taskbar() {
  return (
    <footer className="flex h-20 items-stretch justify-between overflow-hidden border-t-2 border-black bg-[#1e1e1e]">
      <div className="flex pl-1">
        {apps.map((a) => (
          <button key={a.name} aria-label={a.name} className={`flex w-[98px] flex-col items-center ${a.state === "active" ? "bg-[#383735]" : ""}`}>
            <span className="flex flex-1 items-center">{a.icon}</span>
            <span className={`h-[5px] ${a.state === "active" ? "w-full bg-[#b9b5b4]" : a.state === "open" ? "w-[81px] bg-[#b9b5b4]" : "w-full"}`} />
          </button>
        ))}
      </div>
      <div className="flex items-center pb-1 text-white">
        {trayIcons.map((t) => (
          <button key={t.name} aria-label={t.name} className={`flex h-full shrink-0 items-center justify-center ${t.width}`}>
            {t.icon}
          </button>
        ))}
        <button className="flex h-full w-9 items-center justify-center text-[26px]">中</button>
        <button aria-label="QQ输入法" className="ml-[22px] flex h-full w-[34px] items-center">
          <svg viewBox="0 0 34 36" className="h-9 w-[34px]">
            <rect width="34" height="36" rx="7" fill="#2f84d8" />
            <ellipse cx="17" cy="17" rx="9" ry="10.500" fill="none" stroke="#fff" strokeWidth="4" />
            <circle cx="27" cy="29" r="3" fill="#7ed957" />
          </svg>
        </button>
        <div className="ml-[34px] flex w-[46px] flex-col overflow-hidden text-[26px] leading-[37px]">
          <span className="pl-7">18</span>
          <span>2022</span>
        </div>
      </div>
    </footer>
  );
}

export default function App() {
  return (
    <div className="flex min-h-screen w-full flex-col overflow-hidden bg-[#f0f0f0] font-['Noto_Sans','Noto_Sans_CJK_SC',sans-serif]">
      <TitleBar />
      <RibbonTabs />
      <Ribbon />
      <FormulaBar />
      <Worksheet />
      <SheetTabs />
      <StatusBar />
      <Taskbar />
    </div>
  );
}
